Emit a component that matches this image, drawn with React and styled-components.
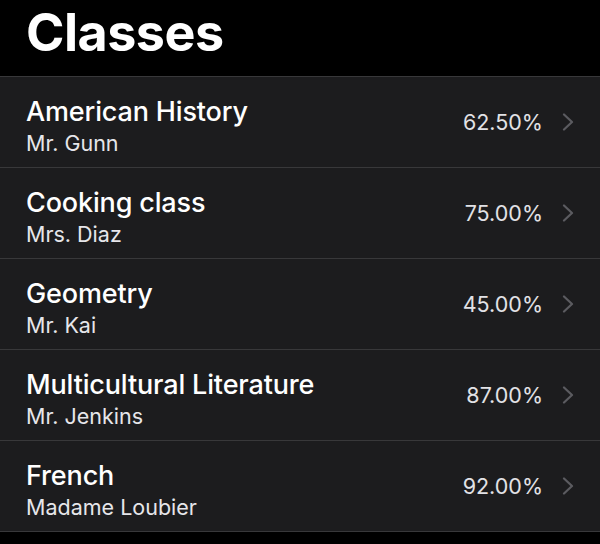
import React from "react";
import styled, { createGlobalStyle } from "styled-components";

const CLASSES = [
  { name: "American History", teacher: "Mr. Gunn", grade: "62.50%" },
  { name: "Cooking class", teacher: "Mrs. Diaz", grade: "75.00%" },
  { name: "Geometry", teacher: "Mr. Kai", grade: "45.00%" },
  { name: "Multicultural Literature", teacher: "Mr. Jenkins", grade: "87.00%" },
  { name: "French", teacher: "Madame Loubier", grade: "92.00%" }
];

const GlobalStyle = createGlobalStyle`
  html, body {
    margin: 0;
    padding: 0;
    background: #000;
    font-family: Inter, "Liberation Sans", sans-serif;
    -webkit-font-smoothing: antialiased;
  }
`;

const Chevron = () => (
  <ChevronSvg viewBox="0 0 12 18" width="12" height="18">
    <path
      d="M2 1.5 L10 9 L2 16.5"
      fill="none"
      stroke="#5b5b60"
      strokeWidth="2.2"
      strokeLinecap="round"
      strokeLinejoin="round"
    />
  </ChevronSvg>
);

const App = () => {
  return (
    <>
      <GlobalStyle />
      <Screen>
        <Header>
          <Title>Classes</Title>
        </Header>
        <List>
          {CLASSES.map((item) => (
            <Row key={item.name}>
              <Info>
                <Name>{item.name}</Name>
                <Teacher>{item.teacher}</Teacher>
              </Info>
              <Grade>{item.grade}</Grade>
              <Chevron />
            </Row>
          ))}
        </List>
      </Screen>
    </>
  );
};

const Screen = styled.div`
  width: 600px;
  height: 544px;
  background: #000;
  overflow: hidden;
  display: flex;
  flex-direction: column;
`;

const Header = styled.div`
  height: 76px;
  padding-left: 26px;
  display: flex;
  align-items: center;
`;

const Title = styled.h1`
  margin: 0;
  color: #fff;
  font-size: 52px;
  font-weight: 700;
  letter-spacing: -0.5px;
  line-height: 1;
  margin-top: -11px;
`;

const List = styled.div`
  background: #1c1c1e;
  border-top: 1px solid #38383a;
`;

const Row = styled.div`
  height: 90px;
  border-bottom: 1px solid #38383a;
  padding: 0 26px 0 26px;
  display: flex;
  align-items: center;
`;

const Info = styled.div`
  flex: 1;
  display: flex;
  flex-direction: column;
  gap: 2px;
  margin-top: 8px;
`;

const Name = styled.div`
  color: #fff;
  font-size: 27px;
  font-weight: 500;
  letter-spacing: -0.15px;
  line-height: 32px;
`;

const Teacher = styled.div`
  color: #e6e6ea;
  font-size: 21.5px;
  line-height: 26px;
`;

const Grade = styled.div`
  color: #e2e2e6;
  font-size: 21.5px;
  margin-right: 19px;
`;

const ChevronSvg = styled.svg`
  display: block;
`;

export default App;
